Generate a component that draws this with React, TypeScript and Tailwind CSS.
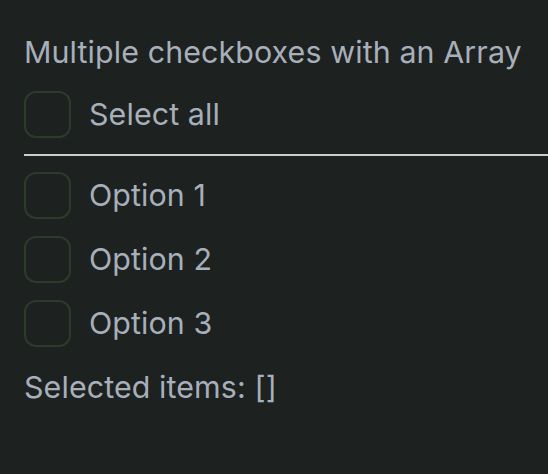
import React from "react";

function Box() {
  return <div className="w-[47px] h-[47px] rounded-[12px] border-2 border-[#2c3b2c] shrink-0" />;
}

export default function App() {
  const opts = ["Option 1", "Option 2", "Option 3"];
  return (
    <div className="w-[548px] h-[474px] bg-[#1d2120] overflow-hidden text-[#a7afba] text-[30.4px] tracking-[0.1px]" style={{ fontFamily: 'Inter, "Liberation Sans", Arial, sans-serif' }}>
      <div className="pl-6 pt-[34px]">
        <div className="h-[36px] leading-[36px]">Multiple checkboxes with an Array</div>
        <div className="mt-[21px] flex items-center gap-[18px] h-[47px]">
          <Box />
          <span>Select all</span>
        </div>
        <div className="mt-[16px] h-[2px] bg-[#c9cdd1]" />
        <div className="mt-[16px] flex flex-col gap-[17px]">
          {opts.map((o) => (
            <div key={o} className="flex items-center gap-[18px] h-[47px]">
              <Box />
              <span>{o}</span>
            </div>
          ))}
        </div>
        <div className="mt-[22px] h-[36px] leading-[36px]">Selected items: []</div>
      </div>
    </div>
  );
}
